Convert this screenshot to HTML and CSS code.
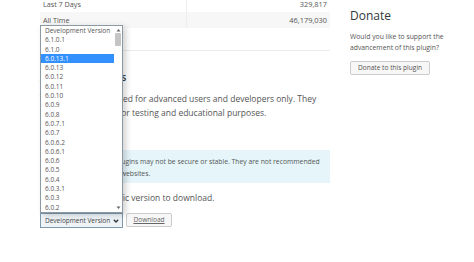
FILE: index.html
```html
<!DOCTYPE html>
<html>
<head>
<meta charset="utf-8">
<link rel="stylesheet" href="styles.css">
</head>
<body>
<div class="page">
  <main class="main">
    <table class="stats">
      <tr><td class="label">Last 7 Days</td><td class="value">329,817</td></tr>
      <tr class="alt"><td class="label">All Time</td><td class="value">46,179,030</td></tr>
    </table>
    <hr class="rule">
    <h3 class="section-title">Advanced Options</h3>
    <p class="text">This section is intended for advanced users and developers only. They are presented here for testing and educational purposes.</p>
    <h4 class="sub-title">Previous Versions</h4>
    <div class="notice">Previous versions of plugins may not be secure or stable. They are not recommended for use on production websites.</div>
    <p class="text pick">Please select a specific version to download.</p>
    <div class="download-row">
      <div class="select-wrap">
        <div class="select">Development Version<span class="chev"><svg width="6" height="4" viewBox="0 0 6 4"><path d="M0.8 0.8 L3 3 L5.2 0.8" fill="none" stroke="#333" stroke-width="1.3"/></svg></span></div>
        <div class="listbox">
          <div class="opt">Development Version</div>
          <div class="opt">6.1.0.1</div>
          <div class="opt">6.1.0</div>
          <div class="opt sel">6.0.13.1</div>
          <div class="opt">6.0.13</div>
          <div class="opt">6.0.12</div>
          <div class="opt">6.0.11</div>
          <div class="opt">6.0.10</div>
          <div class="opt">6.0.9</div>
          <div class="opt">6.0.8</div>
          <div class="opt">6.0.7.1</div>
          <div class="opt">6.0.7</div>
          <div class="opt">6.0.6.2</div>
          <div class="opt">6.0.6.1</div>
          <div class="opt">6.0.6</div>
          <div class="opt">6.0.5</div>
          <div class="opt">6.0.4</div>
          <div class="opt">6.0.3.1</div>
          <div class="opt">6.0.3</div>
          <div class="opt">6.0.2</div>
          <div class="scrollbar">
            <svg class="arr up" width="5" height="4" viewBox="0 0 5 4"><path d="M0.5 3.5 L2.5 1 L4.5 3.5Z" fill="#666"/></svg>
            <div class="thumb"></div>
            <svg class="arr down" width="5" height="4" viewBox="0 0 5 4"><path d="M0.5 0.5 L2.5 3 L4.5 0.5Z" fill="#666"/></svg>
          </div>
        </div>
      </div>
      <button class="btn dl">Download</button>
    </div>
  </main>
  <aside class="side">
    <h3 class="side-title">Donate</h3>
    <p class="side-text">Would you like to support the advancement of this plugin?</p>
    <button class="btn donate">Donate to this plugin</button>
  </aside>
</div>
</body>
</html>
```
FILE: styles.css
```css
html, body {
  margin: 0;
  padding: 0;
  background: #fff;
}
body {
  font-family: "Open Sans", "Noto Sans", sans-serif;
  color: #555;
  width: 474px;
  height: 262px;
  overflow: hidden;
}
.page {
  display: flex;
  padding-left: 40px;
}
.main {
  width: 290px;
  flex: none;
}
.side {
  width: 110px;
  margin-left: 20px;
  flex: none;
}
.stats {
  width: 100%;
  border-collapse: collapse;
  margin-top: -4px;
  font-size: 7.2px;
  color: #555;
}
.stats td {
  height: 16px;
  padding: 0 3px;
  vertical-align: middle;
}
.stats .label {
  width: 140px;
  border-right: 1px solid #eee;
}
.stats .value {
  text-align: right;
  font-size: 7.4px;
}
.stats .alt td {
  background: #f7f7f7;
}
.rule {
  border: 0;
  border-top: 1px solid #eaeaea;
  margin: 22px 0 0 0;
}
.section-title {
  font-size: 9.8px;
  font-weight: 600;
  color: #32373c;
  margin: 20px 0 0 0;
  line-height: 14px;
}
.text {
  font-size: 8.5px;
  line-height: 14px;
  margin: 7px 0 0 0;
  color: #555;
}
.sub-title {
  font-size: 8px;
  font-weight: 600;
  margin: 8px 0 0 0;
  line-height: 14px;
}
.notice {
  margin-top: 8px;
  background: #e5f5fa;
  border-left: 2px solid #00a0d2;
  font-size: 6.8px;
  line-height: 12px;
  padding: 6px 4px 3px 8px;
  color: #555;
}
.pick {
  margin-top: 8px;
}
.download-row {
  display: flex;
  align-items: flex-start;
  gap: 3px;
  margin-top: 8px;
}
.select-wrap {
  position: relative;
}
.select {
  width: 77px;
  height: 13px;
  border: 1px solid #7e98ad;
  background: #eef3f7;
  font-size: 6.5px;
  line-height: 13px;
  color: #444;
  padding-left: 4px;
  position: relative;
  white-space: nowrap;
}
.chev {
  position: absolute;
  right: 3px;
  top: 5px;
  line-height: 0;
}
.listbox {
  position: absolute;
  left: 0;
  bottom: 15px;
  width: 81px;
  height: 186px;
  background: #fff;
  border: 1px solid #8c9aa6;
  box-shadow: 3px 2px 6px rgba(0,0,0,0.18);
  overflow: hidden;
}
.opt {
  height: 9.3px;
  line-height: 9.3px;
  font-size: 6.5px;
  padding-left: 4px;
  width: 70px;
  color: #555;
  white-space: nowrap;
}
.opt.sel {
  background: #3390ff;
  color: #fff;
}
.scrollbar {
  position: absolute;
  right: 0;
  top: 0;
  bottom: 0;
  width: 8px;
  background: #fff;
}
.arr {
  position: absolute;
  left: 1.5px;
}
.arr.up { top: 2px; }
.arr.down { bottom: 2px; }
.thumb {
  position: absolute;
  left: 1px;
  top: 7px;
  width: 6px;
  height: 13px;
  background: #c4c4c4;
  border-radius: 1px;
}
.btn {
  font-family: "Open Sans", "Noto Sans", sans-serif;
  font-size: 6.6px;
  color: #555;
  background: #f7f7f7;
  border: 1px solid #ccc;
  border-radius: 2px;
  height: 14px;
  padding: 0;
  line-height: 12px;
}
.dl {
  width: 46px;
  text-decoration: underline;
  color: #666;
}
.side-title {
  font-size: 12px;
  font-weight: 400;
  color: #32373c;
  margin: 7px 0 0 0;
  line-height: 17px;
}
.side-text {
  font-size: 6.8px;
  line-height: 11px;
  margin: 7px 0 0 0;
}
.donate {
  margin-top: 7px;
  width: 80px;
}
```
